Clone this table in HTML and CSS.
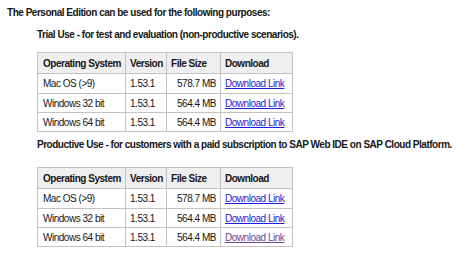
FILE: index.html
```html
<!DOCTYPE html>
<html lang="en">
<head>
<meta charset="utf-8">
<title>SAP Web IDE Personal Edition</title>
<link rel="stylesheet" href="styles.css">
</head>
<body>
<p class="intro">The Personal Edition can be used for the following purposes:</p>

<section class="usage">
  <p class="usage-title">Trial Use - for test and evaluation (non-productive scenarios).</p>
  <table class="downloads">
    <colgroup>
      <col class="c-os"><col class="c-ver"><col class="c-size"><col class="c-dl">
    </colgroup>
    <thead>
      <tr><th>Operating System</th><th>Version</th><th>File Size</th><th>Download</th></tr>
    </thead>
    <tbody>
      <tr class="first"><td>Mac OS (&gt;9)</td><td>1.53.1</td><td class="size">578.7 MB</td><td><a href="#">Download Link</a></td></tr>
      <tr><td>Windows 32 bit</td><td>1.53.1</td><td class="size">564.4 MB</td><td><a href="#">Download Link</a></td></tr>
      <tr><td>Windows 64 bit</td><td>1.53.1</td><td class="size">564.4 MB</td><td><a href="#">Download Link</a></td></tr>
    </tbody>
  </table>
</section>

<section class="usage">
  <p class="usage-title second">Productive Use - for customers with a paid subscription to SAP Web IDE on SAP Cloud Platform.</p>
  <table class="downloads">
    <colgroup>
      <col class="c-os"><col class="c-ver"><col class="c-size"><col class="c-dl">
    </colgroup>
    <thead>
      <tr><th>Operating System</th><th>Version</th><th>File Size</th><th>Download</th></tr>
    </thead>
    <tbody>
      <tr class="first"><td>Mac OS (&gt;9)</td><td>1.53.1</td><td class="size">578.7 MB</td><td><a href="#">Download Link</a></td></tr>
      <tr><td>Windows 32 bit</td><td>1.53.1</td><td class="size">564.4 MB</td><td><a href="#">Download Link</a></td></tr>
      <tr><td>Windows 64 bit</td><td>1.53.1</td><td class="size">564.4 MB</td><td><a href="#" class="visited">Download Link</a></td></tr>
    </tbody>
  </table>
</section>
</body>
</html>
```
FILE: styles.css
```css
body {
  margin: 0;
  padding: 7px 7px 0;
  background: #fff;
  color: #161616;
  font-family: "Liberation Sans", Arial, sans-serif;
  font-size: 10px;
  letter-spacing: -0.48px;
}

.intro {
  margin: 0;
  font-weight: bold;
  line-height: 12px;
}

.usage {
  padding-left: 30px;
}

.usage-title {
  margin: 10px 0 11px;
  font-weight: bold;
  line-height: 12px;
  white-space: nowrap;
}

.usage-title.second {
  margin: 7px 0 16px;
}

.downloads {
  border-collapse: collapse;
  table-layout: fixed;
  width: 255px;
  border: 1px solid #bdbdbd;
}

.c-os { width: 88px; }
.c-ver { width: 41px; }
.c-size { width: 54px; }
.c-dl { width: 72px; }

.downloads th,
.downloads td {
  border: 1px solid #c2c2c2;
  padding: 0 4px;
  text-align: left;
  white-space: nowrap;
  overflow: hidden;
}

.downloads th:first-child,
.downloads td:first-child {
  padding-left: 5px;
}

.downloads thead tr {
  height: 21px;
}

.downloads tbody tr {
  height: 19px;
}

.downloads tbody tr.first {
  height: 20px;
}

.downloads th {
  background: #efefef;
  font-weight: bold;
}

.downloads td.size {
  text-align: right;
}

.downloads a {
  color: #1c1cd2;
  text-decoration: underline;
}

.downloads a.visited {
  color: #6d4497;
}
```
